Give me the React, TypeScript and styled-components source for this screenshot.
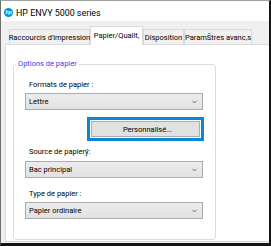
import React from "react";
import styled, { createGlobalStyle } from "styled-components";

const FONT = `"Roboto", "Liberation Sans", sans-serif`;

const Global = createGlobalStyle`
  html, body { margin: 0; padding: 0; background: #ffffff; }
  #root { width: 271px; height: 246px; }
`;

const Window = styled.div`
  box-sizing: border-box;
  width: 271px;
  height: 246px;
  display: flex;
  flex-direction: column;
  border-top: 1px solid #a0a0a0;
  border-left: 1px solid #707070;
  border-right: 2px solid #151515;
  border-bottom: 3px solid #151515;
  font-family: ${FONT};
  font-size: 7.5px;
  color: #000;
  overflow: hidden;
`;

const TitleBar = styled.div`
  height: 20px;
  box-sizing: border-box;
  padding: 3px 0 0 3px;
  display: flex;
  align-items: center;
  gap: 3px;
  background: #ffffff;
`;

const TitleText = styled.span`
  font-size: 8.9px;
  color: #000;
  white-space: nowrap;
`;

const Body = styled.div`
  flex: 1;
  display: flex;
  flex-direction: column;
  background: #f0f0f0;
  padding: 0 0 1px 4px;
  min-height: 0;
`;

const TabRow = styled.div`
  height: 23px;
  flex: none;
  display: flex;
  align-items: flex-end;
  padding-left: 4px;
`;

const Tab = styled.div<{ $w: number; $active?: boolean }>`
  box-sizing: border-box;
  width: ${(p) => p.$w}px;
  height: ${(p) => (p.$active ? 19 : 15)}px;
  margin-bottom: ${(p) => (p.$active ? -1 : 0)}px;
  position: relative;
  z-index: ${(p) => (p.$active ? 1 : 0)};
  border: 1px solid #d9d9d9;
  border-bottom: none;
  background: ${(p) => (p.$active ? "#ffffff" : "#f0f0f0")};
  display: flex;
  align-items: ${(p) => (p.$active ? "flex-start" : "center")};
  padding-top: ${(p) => (p.$active ? 4 : 0)}px;
  justify-content: center;
  white-space: nowrap;
  color: #000;
`;

const Panel = styled.div`
  flex: 1;
  min-height: 0;
  display: flex;
  flex-direction: column;
  background: #ffffff;
  border: 1px solid #d9d9d9;
  border-right: none;
  padding: 13px 0 1px 7px;
`;

const GroupBox = styled.fieldset`
  box-sizing: border-box;
  width: 203px;
  flex: 1;
  margin: 0;
  min-width: 0;
  border: 1px solid #dcdcdc;
  border-radius: 3px;
  padding: 8px 11px 0 11px;
  display: flex;
  flex-direction: column;
`;

const Legend = styled.legend`
  color: #3a3aee;
  line-height: 12px;
  padding: 0 2px;
  margin-left: -9px;
  white-space: nowrap;
`;

const Field = styled.div<{ $top: number; $gap: number }>`
  margin-top: ${(p) => p.$top}px;
  display: flex;
  flex-direction: column;
  gap: ${(p) => p.$gap}px;
`;

const Label = styled.div`
  height: 14px;
  line-height: 14px;
  padding-left: 4px;
  white-space: nowrap;
  color: #000;
`;

const Select = styled.div`
  box-sizing: border-box;
  width: 178px;
  height: 17px;
  border: 1px solid #acacac;
  background: linear-gradient(#ececec, #e2e2e2);
  display: flex;
  align-items: center;
  justify-content: space-between;
  padding: 0 5px 0 3px;
  color: #000;
  white-space: nowrap;
`;

const FocusRing = styled.div`
  box-sizing: border-box;
  width: 117px;
  height: 24px;
  margin: 7px 0 0 62px;
  border: 3px solid #0a86d8;
  padding: 1px;
  background: #ffffff;
`;

const Button = styled.button`
  box-sizing: border-box;
  width: 100%;
  height: 100%;
  margin: 0;
  padding: 0 0 0 4px;
  border: 1px solid #adadad;
  background: #e1e1e1;
  font-family: ${FONT};
  font-size: 7.5px;
  color: #000;
  display: flex;
  align-items: center;
  justify-content: center;
`;

const HpLogo = () => (
  <svg width="9" height="9" viewBox="0 0 18 18" style={{ flex: "none" }}>
    <circle cx="9" cy="9" r="9" fill="#0096d6" />
    <text
      x="9"
      y="12.6"
      textAnchor="middle"
      fontFamily="Liberation Sans, sans-serif"
      fontStyle="italic"
      fontWeight="bold"
      fontSize="10"
      fill="#ffffff"
    >
      hp
    </text>
  </svg>
);

const Chevron = () => (
  <svg width="5" height="4" viewBox="0 0 5 4" style={{ flex: "none" }}>
    <polyline points="0.5,0.8 2.5,3 4.5,0.8" fill="none" stroke="#666" strokeWidth="0.9" />
  </svg>
);

const Combo = ({ value }: { value: string }) => (
  <Select>
    <span>{value}</span>
    <Chevron />
  </Select>
);

const tabs = [
  { label: "Raccourcis d'impression", w: 81 },
  { label: "Papier/Qualit‚", w: 53, active: true },
  { label: "Disposition", w: 41 },
  { label: "ParamŠtres avanc‚s", w: 68 },
];

export default function App() {
  return (
    <>
      <Global />
      <Window>
        <TitleBar>
          <HpLogo />
          <TitleText>HP ENVY 5000 series</TitleText>
        </TitleBar>
        <Body>
          <TabRow>
            {tabs.map((t) => (
              <Tab key={t.label} $w={t.w} $active={t.active}>
                {t.label}
              </Tab>
            ))}
          </TabRow>
          <Panel>
            <GroupBox>
              <Legend>Options de papier</Legend>
              <Field $top={0} $gap={1}>
                <Label>Formats de papier :</Label>
                <Combo value="Lettre" />
              </Field>
              <FocusRing>
                <Button>Personnalisé...</Button>
              </FocusRing>
              <Field $top={4} $gap={2}>
                <Label>Source de papierÿ:</Label>
                <Combo value="Bac principal" />
              </Field>
              <Field $top={9} $gap={1}>
                <Label>Type de papier :</Label>
                <Combo value="Papier ordinaire" />
              </Field>
            </GroupBox>
          </Panel>
        </Body>
      </Window>
    </>
  );
}
